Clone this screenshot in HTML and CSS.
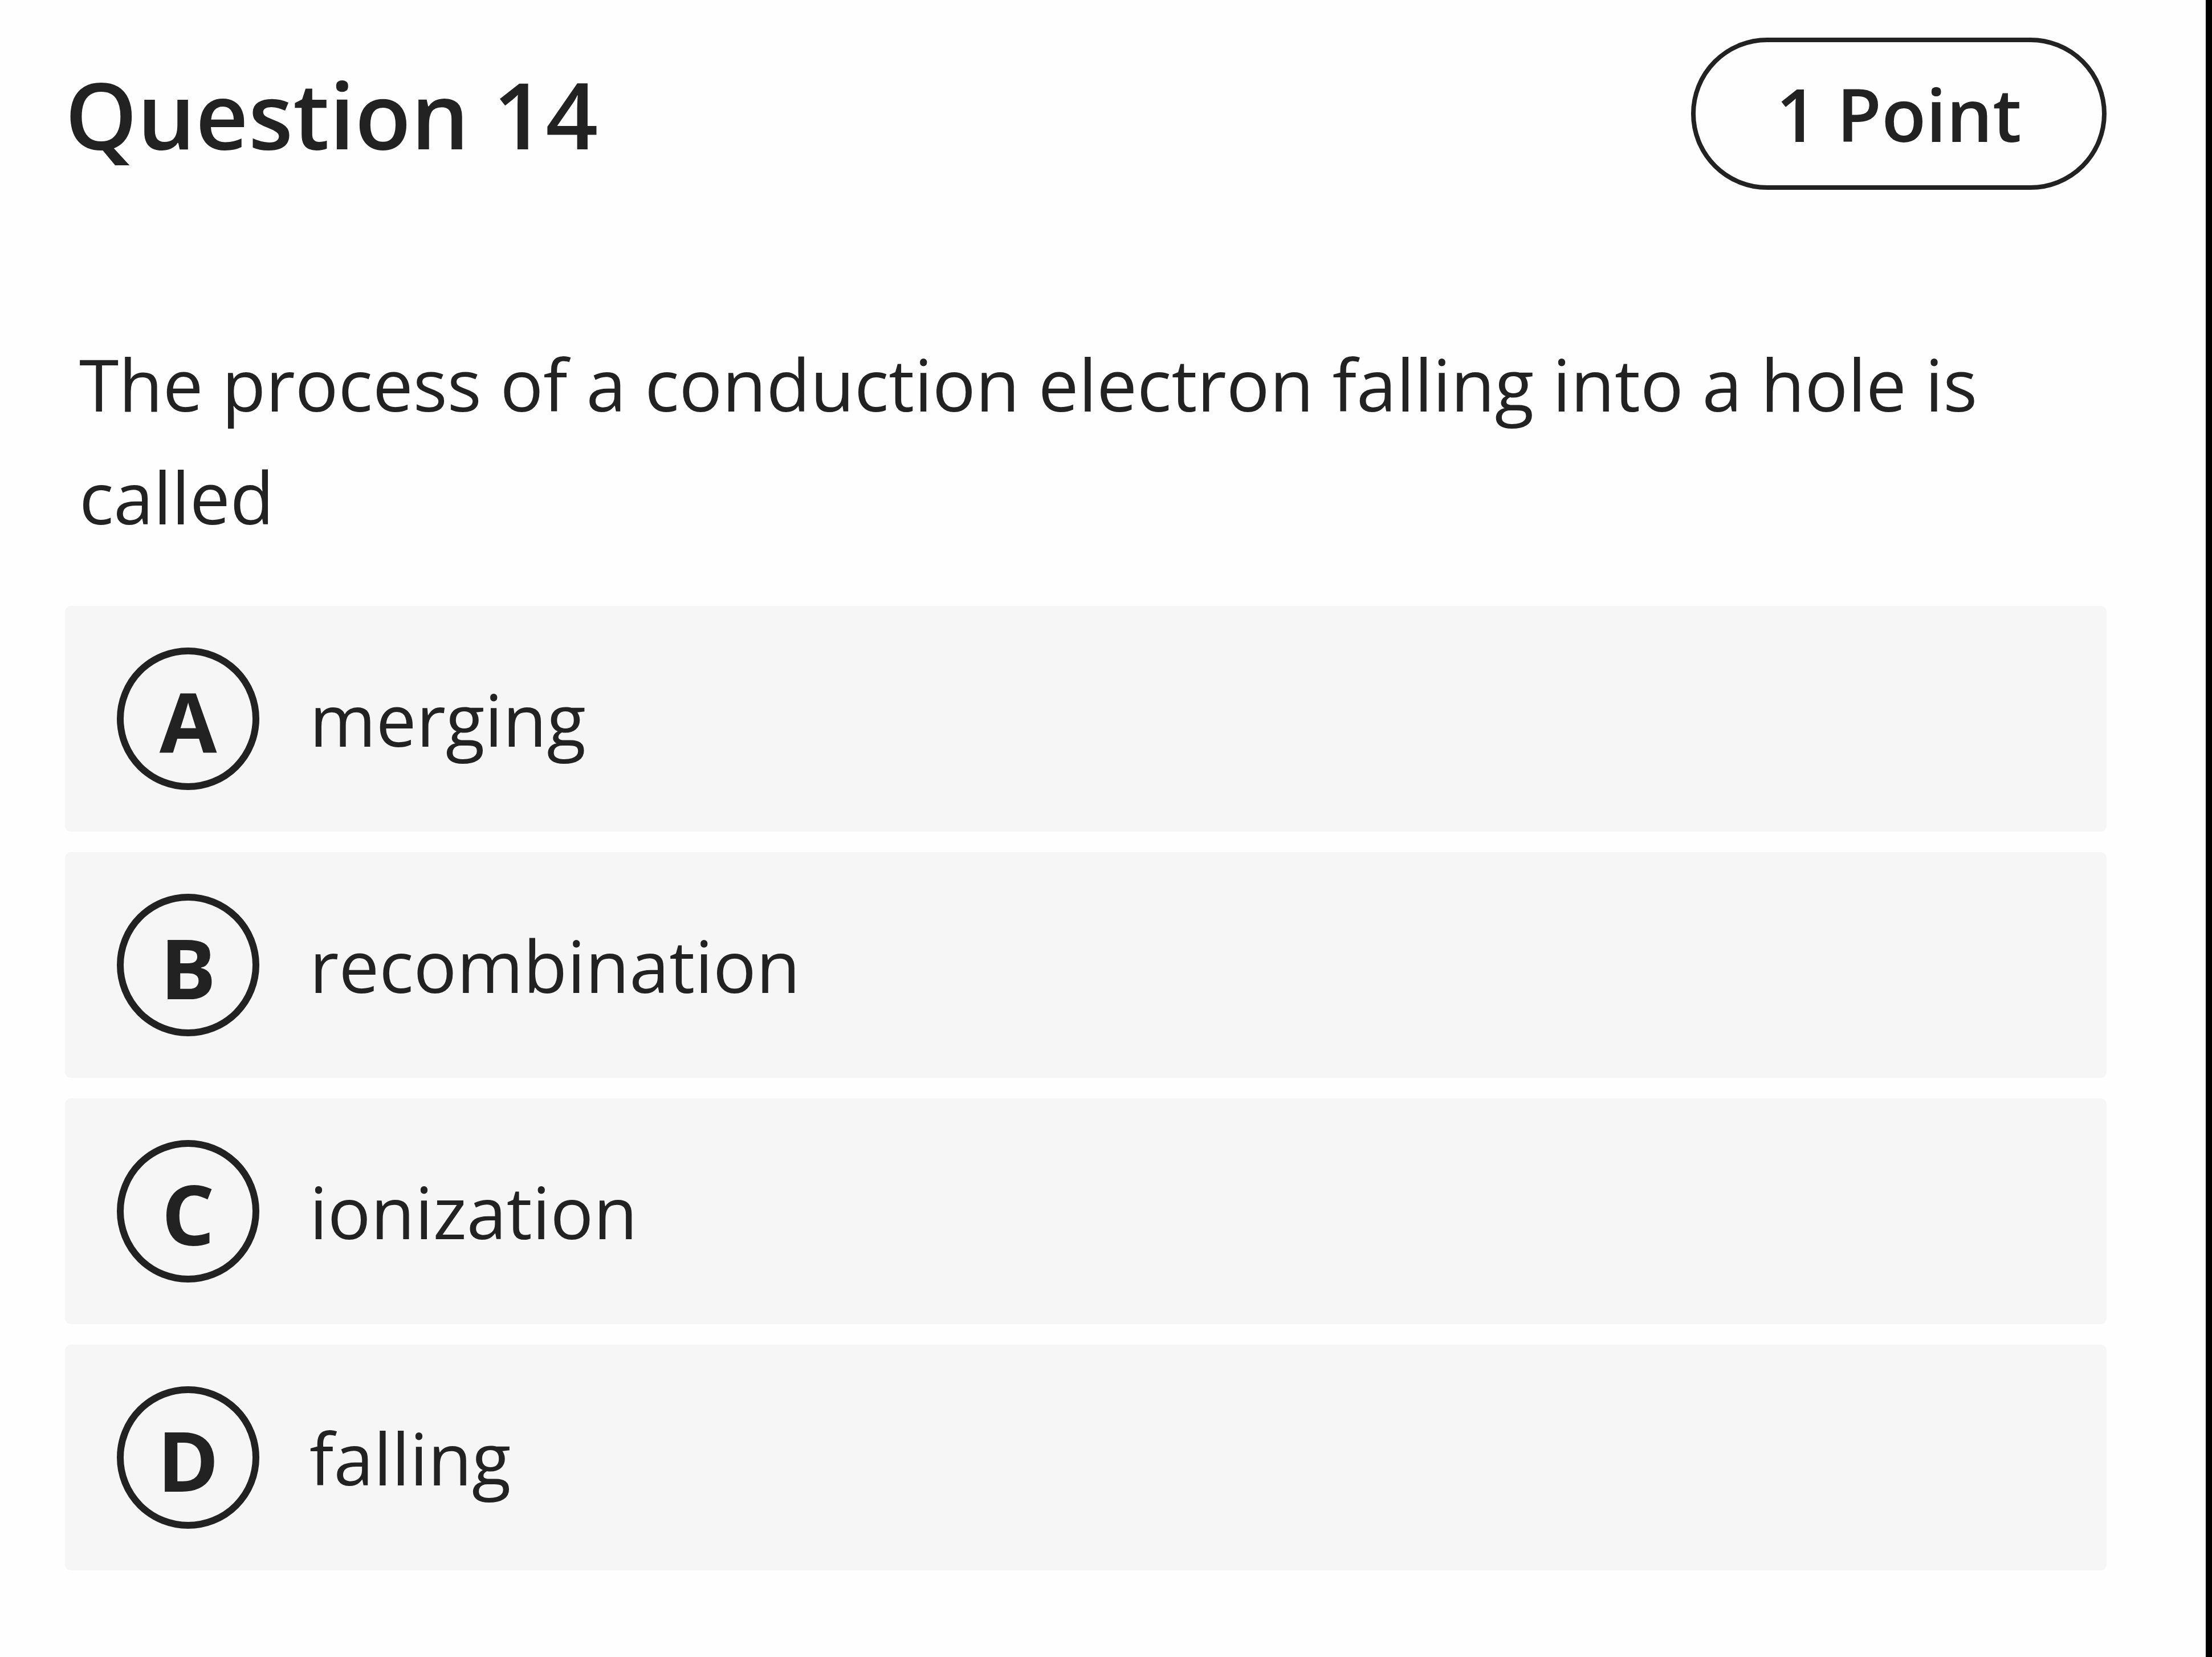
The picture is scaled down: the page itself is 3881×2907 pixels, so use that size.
FILE: index.html
```html
<!DOCTYPE html>
<html lang="en">
<head>
<meta charset="utf-8">
<title>Question 14</title>
<link rel="stylesheet" href="styles.css">
</head>
<body>
<main class="page">
  <header class="q-header">
    <h1 class="q-title">Question 14</h1>
    <span class="points">1 Point</span>
  </header>
  <p class="q-text">The process of a conduction electron falling into a hole is called</p>
  <ul class="options">
    <li class="option"><span class="badge">A</span><span class="label">merging</span></li>
    <li class="option"><span class="badge">B</span><span class="label">recombination</span></li>
    <li class="option"><span class="badge">C</span><span class="label">ionization</span></li>
    <li class="option"><span class="badge">D</span><span class="label">falling</span></li>
  </ul>
</main>
<div class="edge"></div>
</body>
</html>
```
FILE: styles.css
```css
html, body {
  margin: 0;
  padding: 0;
  height: 100%;
}
body {
  display: flex;
  background: #fefefe;
  color: #222222;
  font-family: "Open Sans", "Noto Sans", sans-serif;
}
.page {
  flex: 1;
  padding: 66px 174px 0 114px;
}
.edge {
  width: 11px;
  background: #000;
  flex: none;
}
.q-header {
  display: flex;
  align-items: center;
  justify-content: space-between;
}
.q-title {
  margin: 0;
  font-size: 161px;
  font-weight: 600;
  line-height: 1.362;
  color: #222;
}
.points {
  box-sizing: border-box;
  display: inline-flex;
  align-items: center;
  justify-content: center;
  width: 729px;
  height: 267px;
  border: 8px solid #222;
  border-radius: 134px;
  font-size: 128px;
  font-weight: 600;
  color: #222;
}
.q-text {
  margin: 241px 0 0 0;
  padding-left: 25px;
  font-size: 126px;
  line-height: 198px;
  font-weight: 400;
}
.options {
  list-style: none;
  margin: 93px 0 0 0;
  padding: 0;
  display: flex;
  flex-direction: column;
  gap: 36px;
}
.option {
  box-sizing: border-box;
  height: 396px;
  display: flex;
  align-items: center;
  gap: 88px;
  padding-left: 91px;
  background: #f6f6f6;
  border-radius: 10px;
}
.badge {
  box-sizing: border-box;
  width: 250px;
  height: 250px;
  flex: none;
  border: 12px solid #222;
  border-radius: 50%;
  display: flex;
  align-items: center;
  justify-content: center;
  font-size: 146px;
  font-weight: 700;
  line-height: 1;
  padding-top: 8px;
}
.label {
  font-size: 126px;
  font-weight: 400;
}
```
